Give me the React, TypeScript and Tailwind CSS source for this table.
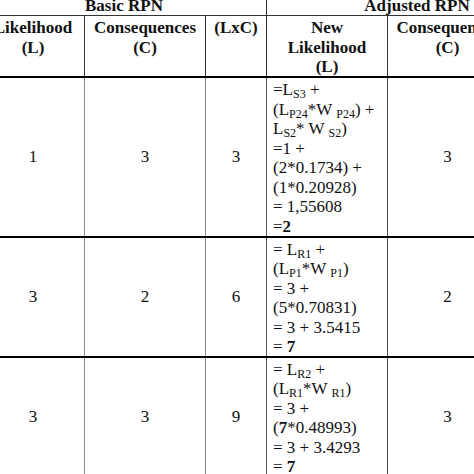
import React from "react";

const S = ({ children }: { children: React.ReactNode }) => (
  <span className="align-[-3px] text-[12px] leading-none">{children}</span>
);

const B = ({ children }: { children: React.ReactNode }) => (
  <span className="font-bold">{children}</span>
);

// widths of the six columns; the first and last run past the edge of the picture
const colW = ["w-[103px]", "w-[121px]", "w-[61px]", "w-[121px]", "w-[120px]", "w-[60px]"];

interface Row {
  h: string;
  likelihood: string;
  consequences: string;
  lxc: string;
  formula: React.ReactNode[];
  newC: string;
}

const rows: Row[] = [
  {
    h: "h-[160px]",
    likelihood: "1",
    consequences: "3",
    lxc: "3",
    formula: [
      <>=L<S>S3</S> +</>,
      <>(L<S>P24</S>*W <S>P24</S>) +</>,
      <>L<S>S2</S>* W <S>S2</S>)</>,
      <>=1 +</>,
      <>(2*0.1734) +</>,
      <>(1*0.20928)</>,
      <>= 1,55608</>,
      <>=<B>2</B></>,
    ],
    newC: "3",
  },
  {
    h: "h-[120px]",
    likelihood: "3",
    consequences: "2",
    lxc: "6",
    formula: [
      <>= L<S>R1</S> +</>,
      <>(L<S>P1</S>*W <S>P1</S>)</>,
      <>= 3 +</>,
      <>(5*0.70831)</>,
      <>= 3 + 3.5415</>,
      <>= <B>7</B></>,
    ],
    newC: "2",
  },
  {
    h: "h-[120px]",
    likelihood: "3",
    consequences: "3",
    lxc: "9",
    formula: [
      <>= L<S>R2</S> +</>,
      <>(L<S>R1</S>*W <S>R1</S>)</>,
      <>= 3 +</>,
      <>(<B>7</B>*0.48993)</>,
      <>= 3 + 3.4293</>,
      <>= <B>7</B></>,
    ],
    newC: "3",
  },
];

export default function App() {
  return (
    <div
      className="h-[474px] w-[474px] overflow-hidden bg-white text-[#111]"
      style={{ fontFamily: '"Liberation Serif", "Times New Roman", serif' }}
    >
      <div className="-mt-[5px] -ml-[18px] w-[600px]">
        {/* group header */}
        <div className="flex h-[21px] border-b border-[#333] text-[17px] leading-[19px] font-bold">
          <div className="flex w-[285px] items-start justify-center border-r border-[#333] pt-[1px]">
            Basic RPN
          </div>
          <div className="flex w-[301px] items-start justify-center border-r border-[#333] pt-[1px]">
            Adjusted RPN
          </div>
        </div>

        {/* column header */}
        <div className="flex h-[62px] border-b-2 border-black text-[17px] leading-[19.5px] font-bold">
          <div className={`${colW[0]} border-r border-[#333] pt-[2px] text-center`}>
            Likelihood
            <br />
            (L)
          </div>
          <div className={`${colW[1]} border-r border-[#333] pt-[2px] text-center`}>
            Consequences
            <br />
            (C)
          </div>
          <div className={`${colW[2]} border-r border-[#333] pt-[2px] text-center`}>(LxC)</div>
          <div className={`${colW[3]} border-r border-[#333] pt-[2px] text-center`}>
            New
            <br />
            Likelihood
            <br />
            (L)
          </div>
          <div className={`${colW[4]} border-r border-[#333] pt-[2px] text-center`}>
            Consequences
            <br />
            (C)
          </div>
          <div className={`${colW[5]} border-r border-[#333] pt-[2px] text-center`}>(LxC)</div>
        </div>

        {/* body */}
        {rows.map((r, i) => (
          <div key={i} className={`flex ${r.h} border-b-2 border-black text-[17px] leading-[19.5px]`}>
            <div className={`flex ${colW[0]} items-center justify-center border-r border-[#8a8a8a]`}>
              {r.likelihood}
            </div>
            <div className={`flex ${colW[1]} items-center justify-center border-r border-[#8a8a8a]`}>
              {r.consequences}
            </div>
            <div className={`flex ${colW[2]} items-center justify-center border-r border-[#555]`}>
              {r.lxc}
            </div>
            <div className={`flex ${colW[3]} flex-col justify-center border-r border-[#555] pl-[6px] pt-[2px] whitespace-nowrap`}>
              {r.formula.map((line, j) => (
                <div key={j} className="h-[19.5px]">
                  {line}
                </div>
              ))}
            </div>
            <div className={`flex ${colW[4]} items-center justify-center border-r border-[#8a8a8a]`}>
              {r.newC}
            </div>
            <div className={`flex ${colW[5]} items-center justify-center border-r border-[#8a8a8a]`}>
              {r.lxc}
            </div>
          </div>
        ))}
      </div>
    </div>
  );
}
